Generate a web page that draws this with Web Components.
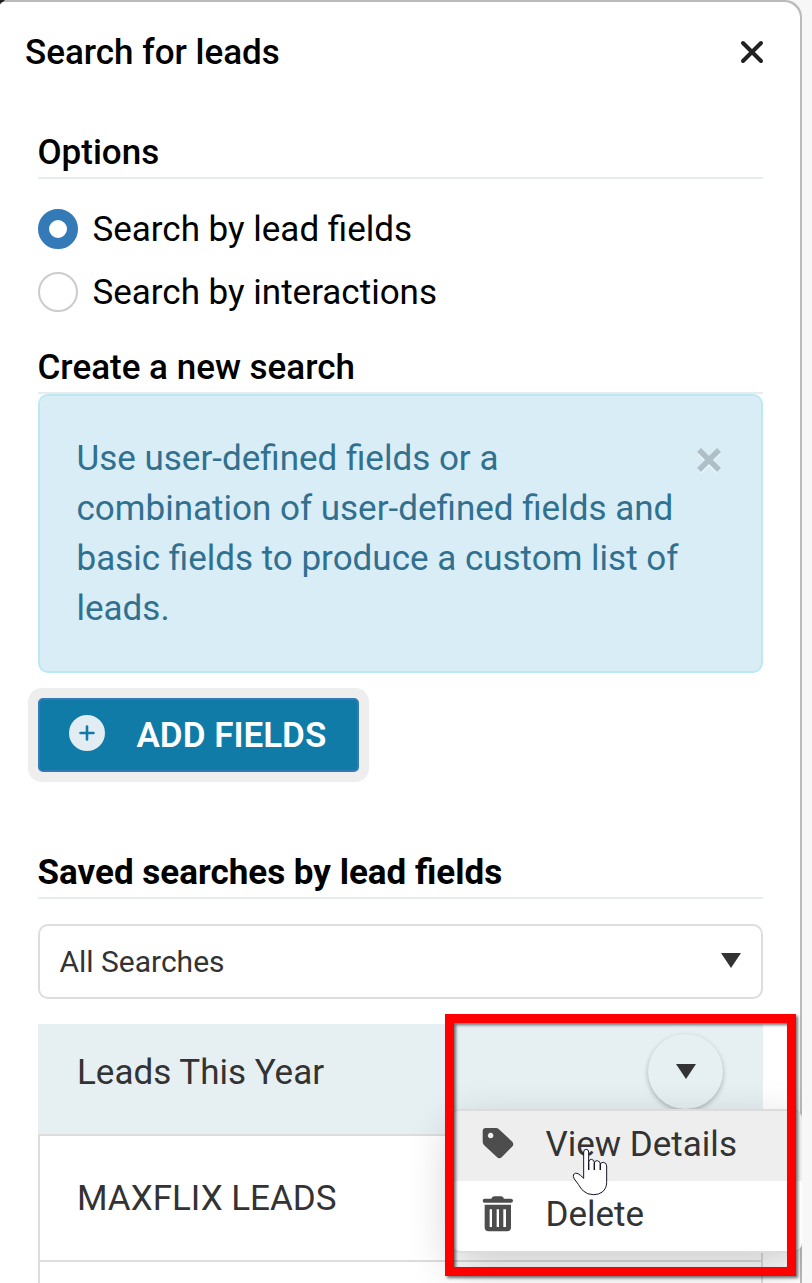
<!DOCTYPE html>
<html lang="en">
<head>
<meta charset="utf-8">
<title>Search for leads</title>
<style>
html, body { margin: 0; height: 100%; overflow: hidden; background: #f7f7f7; }
body { font-family: Roboto, "Liberation Sans", sans-serif; font-size: 35px; color: #000; }
</style>
</head>
<body>
<lead-panel>
  <panel-header>Search for leads</panel-header>
  <section-heading style="--gap:26px">Options</section-heading>
  <radio-option checked>Search by lead fields</radio-option>
  <radio-option>Search by interactions</radio-option>
  <section-heading style="--gap:0px;margin-top:25px">Create a new search</section-heading>
  <info-alert>Use user-defined fields or a combination of user-defined fields and basic fields to produce a custom list of leads.</info-alert>
  <add-button>Add fields</add-button>
  <section-heading bold style="--gap:25px;margin-top:75px">Saved searches by lead fields</section-heading>
  <select-box>All Searches</select-box>
  <saved-list>
    <saved-row active>Leads This Year
      <action-menu slot="menu">
        <menu-item icon="tag" hover>View Details</menu-item>
        <menu-item icon="trash">Delete</menu-item>
      </action-menu>
    </saved-row>
    <saved-row>MAXFLIX LEADS</saved-row>
    <saved-row></saved-row>
  </saved-list>
</lead-panel>
<callout-frame></callout-frame>
<hand-cursor></hand-cursor>
<script>
const define = (name, html) => {
  const template = document.createElement('template');
  template.innerHTML = html;
  customElements.define(name, class extends HTMLElement {
    constructor() {
      super();
      this.attachShadow({ mode: 'open' }).appendChild(template.content.cloneNode(true));
    }
  });
};

define('lead-panel', `
<style>
:host { display: block; box-sizing: border-box; width: 802px; height: 1283px; overflow: hidden;
  background: linear-gradient(135deg, #222 0 3px, #bbb 4px); border-radius: 0 17px 0 0; padding: 2px 2px 0 0; }
.sheet { box-sizing: border-box; height: 100%; background: #fff; border-radius: 4px 16px 0 0; padding: 0 37px 0 38px; }
</style>
<div class="sheet"><slot></slot></div>`);

define('panel-header', `
<style>
:host { display: flex; justify-content: space-between; align-items: center; height: 100px; margin: 0 -1px 25px -13px; font-weight: 500; }
svg { display: block; }
</style>
<span><slot></slot></span>
<svg width="24" height="24" viewBox="0 0 24 24"><path d="M3 3L21 21M21 3L3 21" stroke="#222" stroke-width="4" stroke-linecap="round"/></svg>`);

define('section-heading', `
<style>
:host { display: block; height: 50px; line-height: 52px; border-bottom: 2px solid #e6ecf0; margin-bottom: var(--gap, 0); font-weight: 500; white-space: nowrap; text-indent: -.5px; }
:host([bold]) { font-weight: 700; }
</style><slot></slot>`);

define('radio-option', `
<style>
:host { display: flex; gap: 14.4px; align-items: center; height: 50px; margin-top: 0; margin-bottom: 13px; white-space: nowrap; }
i { box-sizing: border-box; width: 40px; height: 40px; border-radius: 50%; border: 2px solid #ccc; background: #fff; }
:host([checked]) i { border: 11px solid #337ab7; }
:host([checked]) { margin-top: -1px; }
</style><i></i><span><slot></slot></span>`);

define('info-alert', `
<style>
:host { display: flex; box-sizing: border-box; height: 279px; padding: 38px 39px 0 36.5px; justify-content: space-between;
  border: 2px solid #bce8f1; border-radius: 10px; background: #d9edf7; color: #31708f; line-height: 50px; }
p { margin: 0; width: 610px; }
svg { flex: none; display: block; margin-top: 12.5px; }
</style>
<p><slot></slot></p>
<svg width="26" height="28" viewBox="0 0 26 28"><path d="M3.5 5.5L22.5 24.5M22.5 5.5L3.5 24.5" stroke="#fff" stroke-opacity=".5" stroke-width="5.5"/><path d="M3 3L23 23M23 3L3 23" stroke="#aebfc7" stroke-width="5.5"/></svg>`);

define('add-button', `
<style>
:host { display: block; margin-top: 25px; }
button { display: flex; align-items: center; box-sizing: border-box; width: 321px; height: 74px; padding: 0 0 0 29px; margin: 0;
  border: 2px solid #337ab7; border-radius: 5px; background: #117ba8; box-shadow: 0 0 0 10px #eee;
  color: #fff; font: 600 35px Roboto, sans-serif; text-transform: uppercase; white-space: nowrap; }
svg { margin: -4px 31.5px 0 0; }
</style>
<button><svg width="36" height="36" viewBox="0 0 36 36"><circle cx="18" cy="18" r="18" fill="#e1edf2"/><path d="M11.5 18h13M18 11.5v13" stroke="#117ba8" stroke-width="2.6" stroke-linecap="round"/></svg><span><slot></slot></span></button>`);

define('select-box', `
<style>
:host { display: flex; align-items: center; justify-content: space-between; box-sizing: border-box; height: 75px; padding: 0 20.5px 0 19.4px;
  border: 2px solid #ddd; border-radius: 10px; color: #333; font-size: 30px; }
svg { margin-top: -3px; }
</style><span><slot></slot></span>
<svg width="20" height="15" viewBox="0 0 20 15"><path d="M0 0H20L10 15Z" fill="#333"/></svg>`);

define('saved-list', `
<style>:host { display: block; margin-top: 25px; color: #333; }</style><slot></slot>`);

define('saved-row', `
<style>
:host { position: relative; display: flex; box-sizing: border-box; align-items: center; justify-content: space-between; height: 126px; padding: 0 37px; border: 2px solid #ddd; border-bottom: 0; }
:host([active]) { height: 110px; background: #e6eff2; border: 0; padding: 0 40px 0 39px; }
i { display: none; }
:host([active]) i { display: flex; width: 75px; height: 75px; margin-bottom: 15px; border-radius: 50%; align-items: center; justify-content: center;
  margin-top: 0; background: #e6eff2; box-shadow: 0 2px 5px rgba(0,0,0,.26); }
:host([active]) span { margin-top: -14px; }
</style><span><slot></slot></span>
<i><svg width="20" height="15" viewBox="0 0 20 15"><path d="M0 0H20L10 15Z" fill="#333"/></svg></i>
<slot name="menu"></slot>`);

define('action-menu', `
<style>
:host { position: absolute; z-index: 2; left: 413px; top: 85px; width: 351px; box-sizing: border-box; border: 2px solid #dcdcdc; border-width: 2px 0; border-radius: 10px;
  background: #fff; box-shadow: 0 15px 45px rgba(0,0,0,.2); overflow: hidden; }
</style><slot></slot>`);

const ICONS = {
  tag: '<svg width="32" height="32" viewBox="66 86 93 93"><path fill="#4d4d4d" fill-rule="evenodd" d="M77 86H106Q112 86 116 90L154 126Q160 133 154 140L124 170Q117 177 110 171L73 137Q68 132 68 127V95Q68 86 77 86ZM91 100a8 8 0 1 0 .1 0Z"/></svg>',
  trash: '<svg width="32" height="36" viewBox="66 288 96 108"><path fill="#4d4d4d" fill-rule="evenodd" d="M74 296H94Q96 289 104 289H122Q130 289 132 296H153Q159 296 159 302Q159 308 153 308H74Q68 308 68 302Q68 296 74 296ZM74 314H153V382Q153 394 141 394H86Q74 394 74 382ZM89 328V381H96V328ZM110 328V381H117V328ZM130 328V381H138V328Z"/></svg>'
};
customElements.define('menu-item', class extends HTMLElement {
  constructor() {
    super();
    this.attachShadow({ mode: 'open' }).innerHTML = `
<style>
:host { display: flex; align-items: center; box-sizing: border-box; height: 70px; padding: 0 0 4px 31px; gap: 31.5px; white-space: nowrap; color: #333; }
:host([hover]) { background: #eee; }
svg { display: block; flex: none; }
</style>${ICONS[this.getAttribute('icon')]}<span><slot></slot></span>`;
  }
});

define('callout-frame', `
<style>
:host { position: absolute; z-index: 3; left: 445px; top: 1014px; width: 351px; height: 262px; box-sizing: border-box;
  border: 9px solid #f00; filter: drop-shadow(2px 2px 1.5px rgba(0,0,0,.55)); }
</style>`);

define('hand-cursor', `
<style>:host { position: absolute; z-index: 4; left: 570px; top: 1146px; } svg { display: block; }</style>
<svg width="40" height="50" viewBox="330 138 120 150"><path fill="#fff" stroke="#14142b" stroke-width="3" stroke-linejoin="round" d="M371 235V156Q371 148 378.500 148Q386 148 386 156V210V186Q387 178 394 178Q403 179 403 188V210V189Q405 181 412 182Q421 184 421 192V210V193Q423 187 430 187Q440 188 440 198V247Q440 265 427 276Q417 284 400 284Q382 284 370 273Q362 265 355 253L343 237Q338 229 341 223Q346 217 354 221Q359 223 371 235Z"/><path d="M386 190V210M403 190V210M421 192V210" stroke="#14142b" stroke-width="3"/></svg>`);
</script>
</body>
</html>
